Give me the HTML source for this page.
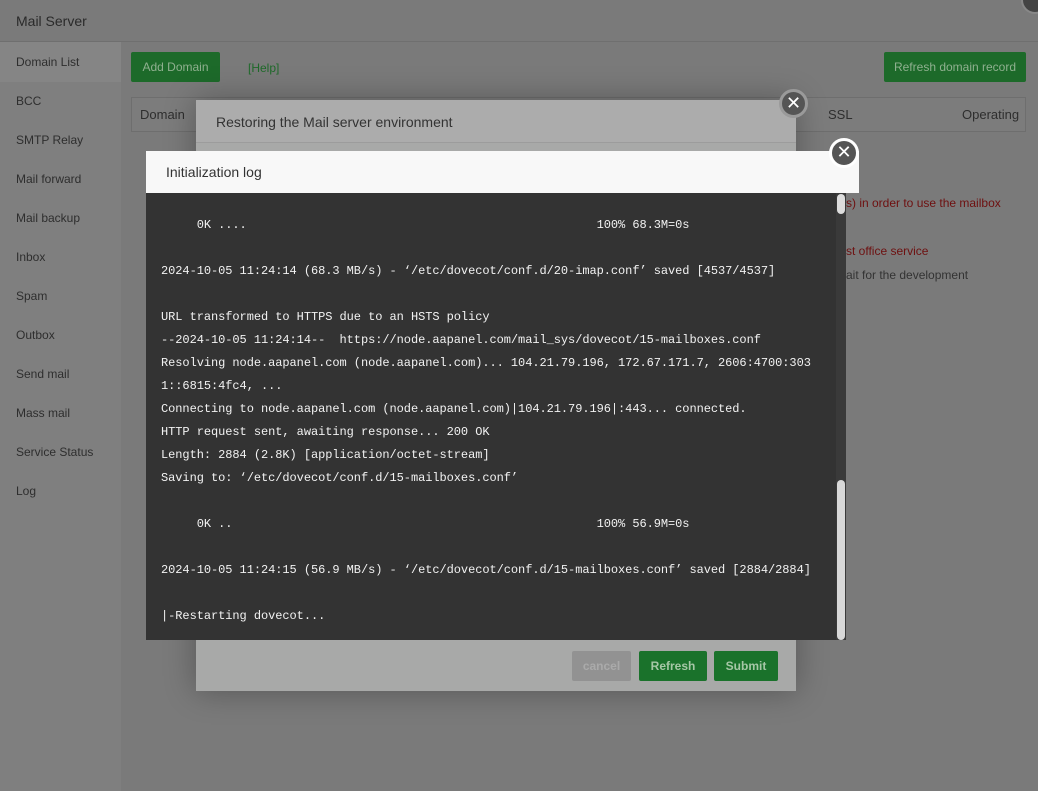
<!DOCTYPE html>
<html><head><meta charset="utf-8"><style>
*{margin:0;padding:0;box-sizing:border-box}
body{width:1038px;height:791px;overflow:hidden;background:#7a7a7a;font-family:"Liberation Sans",sans-serif;position:relative}
.abs{position:absolute}
.side{left:0;top:42px;width:121px;height:749px;background:#7f7f7f}
.sel{left:0;top:42px;width:121px;height:40px;background:#858585}
.btn{position:absolute;border-radius:2px;font-size:12px;text-align:center}
pre{font-family:"Liberation Mono",monospace;font-size:12px;line-height:23px;color:#f2f2f2;letter-spacing:-0.06px}
.x{position:absolute;border-radius:50%;color:#fff;text-align:center;font-size:18px}
</style></head><body>
<div class="abs" style="left:0;top:0;width:1038px;height:42px;border-bottom:1px solid #6f6f6f"></div>
<div class="abs" style="left:16px;top:13px;font-size:14px;color:#2a2a2a">Mail Server</div>
<div class="abs side"></div>
<div class="abs sel"></div>
<div class="abs" style="left:0;top:0;width:121px;height:791px">
<div class="abs" style="left:16px;top:55px;font-size:12px;color:#2e2e2e">Domain List</div>
<div class="abs" style="left:16px;top:94px;font-size:12px;color:#2e2e2e">BCC</div>
<div class="abs" style="left:16px;top:133px;font-size:12px;color:#2e2e2e">SMTP Relay</div>
<div class="abs" style="left:16px;top:172px;font-size:12px;color:#2e2e2e">Mail forward</div>
<div class="abs" style="left:16px;top:211px;font-size:12px;color:#2e2e2e">Mail backup</div>
<div class="abs" style="left:16px;top:250px;font-size:12px;color:#2e2e2e">Inbox</div>
<div class="abs" style="left:16px;top:289px;font-size:12px;color:#2e2e2e">Spam</div>
<div class="abs" style="left:16px;top:328px;font-size:12px;color:#2e2e2e">Outbox</div>
<div class="abs" style="left:16px;top:367px;font-size:12px;color:#2e2e2e">Send mail</div>
<div class="abs" style="left:16px;top:406px;font-size:12px;color:#2e2e2e">Mass mail</div>
<div class="abs" style="left:16px;top:445px;font-size:12px;color:#2e2e2e">Service Status</div>
<div class="abs" style="left:16px;top:484px;font-size:12px;color:#2e2e2e">Log</div>
</div>
<div class="btn" style="left:131px;top:52px;width:89px;height:30px;line-height:30px;background:#1d6a2a;color:#8fb08f">Add Domain</div>
<div class="abs" style="left:248px;top:61px;font-size:12px;color:#1f6a2a">[Help]</div>
<div class="btn" style="left:884px;top:52px;width:142px;height:30px;line-height:30px;background:#1d6a2a;color:#8fb08f">Refresh domain record</div>
<div class="abs" style="left:131px;top:97px;width:895px;height:35px;border:1px solid #6e6e6e;background:#7c7c7c"></div>
<div class="abs" style="left:140px;top:107px;font-size:13px;color:#2e2e2e">Domain</div>
<div class="abs" style="left:828px;top:107px;font-size:13px;color:#2e2e2e">SSL</div>
<div class="abs" style="left:962px;top:107px;font-size:13px;color:#2e2e2e">Operating</div>
<div class="abs" style="left:846px;top:196px;font-size:12px;color:#6e1010">s) in order to use the mailbox</div>
<div class="abs" style="left:846px;top:244px;font-size:12px;color:#6e1010">st office service</div>
<div class="abs" style="left:846px;top:268px;font-size:12px;color:#333">ait for the development</div>
<div class="x" style="left:1021px;top:-14px;width:28px;height:28px;background:#444;border:2px solid #888"></div>

<div class="abs" style="left:196px;top:100px;width:600px;height:591px;background:#a8a9a8;box-shadow:0 0 30px rgba(0,0,0,.3)"></div>
<div class="abs" style="left:196px;top:100px;width:600px;height:43px;background:#acacac;border-bottom:1px solid #9c9c9c"></div>
<div class="abs" style="left:216px;top:114px;font-size:14px;color:#333">Restoring the Mail server environment</div>
<div class="x" style="left:779px;top:89px;width:29px;height:29px;background:#555;border:3px solid #9a9a9a;line-height:22px">✕</div>
<div class="btn" style="left:572px;top:651px;width:59px;height:30px;line-height:30px;background:#929292;color:#aaa;font-weight:bold">cancel</div>
<div class="btn" style="left:639px;top:651px;width:68px;height:30px;line-height:30px;background:#1a722b;color:#a6c7a6;font-weight:bold">Refresh</div>
<div class="btn" style="left:714px;top:651px;width:64px;height:30px;line-height:30px;background:#1a722b;color:#a6c7a6;font-weight:bold">Submit</div>

<div class="abs" style="left:146px;top:151px;width:713px;height:42px;background:#f8f8f8"></div>
<div class="abs" style="left:166px;top:164px;font-size:14px;color:#333">Initialization log</div>
<div class="abs" style="left:146px;top:193px;width:700px;height:447px;background:#333"></div>
<div class="abs" style="left:836px;top:193px;width:10px;height:447px;background:#3a3a3a"></div>
<div class="abs" style="left:837px;top:480px;width:8px;height:160px;background:#d8d8d8;border-radius:4px"></div>
<div class="abs" style="left:837px;top:194px;width:8px;height:20px;background:#ddd;border-radius:4px"></div>
<pre class="abs" style="left:161px;top:214px">     0K ....                                                 100% 68.3M=0s

2024-10-05 11:24:14 (68.3 MB/s) - ‘/etc/dovecot/conf.d/20-imap.conf’ saved [4537/4537]

URL transformed to HTTPS due to an HSTS policy
--2024-10-05 11:24:14--  https://node.aapanel.com/mail_sys/dovecot/15-mailboxes.conf
Resolving node.aapanel.com (node.aapanel.com)... 104.21.79.196, 172.67.171.7, 2606:4700:303
1::6815:4fc4, ...
Connecting to node.aapanel.com (node.aapanel.com)|104.21.79.196|:443... connected.
HTTP request sent, awaiting response... 200 OK
Length: 2884 (2.8K) [application/octet-stream]
Saving to: ‘/etc/dovecot/conf.d/15-mailboxes.conf’

     0K ..                                                   100% 56.9M=0s

2024-10-05 11:24:15 (56.9 MB/s) - ‘/etc/dovecot/conf.d/15-mailboxes.conf’ saved [2884/2884]

|-Restarting dovecot...</pre>
<div class="x" style="left:829px;top:138px;width:30px;height:30px;background:#555;border:3px solid #fff;line-height:23px">✕</div>
</body></html>
